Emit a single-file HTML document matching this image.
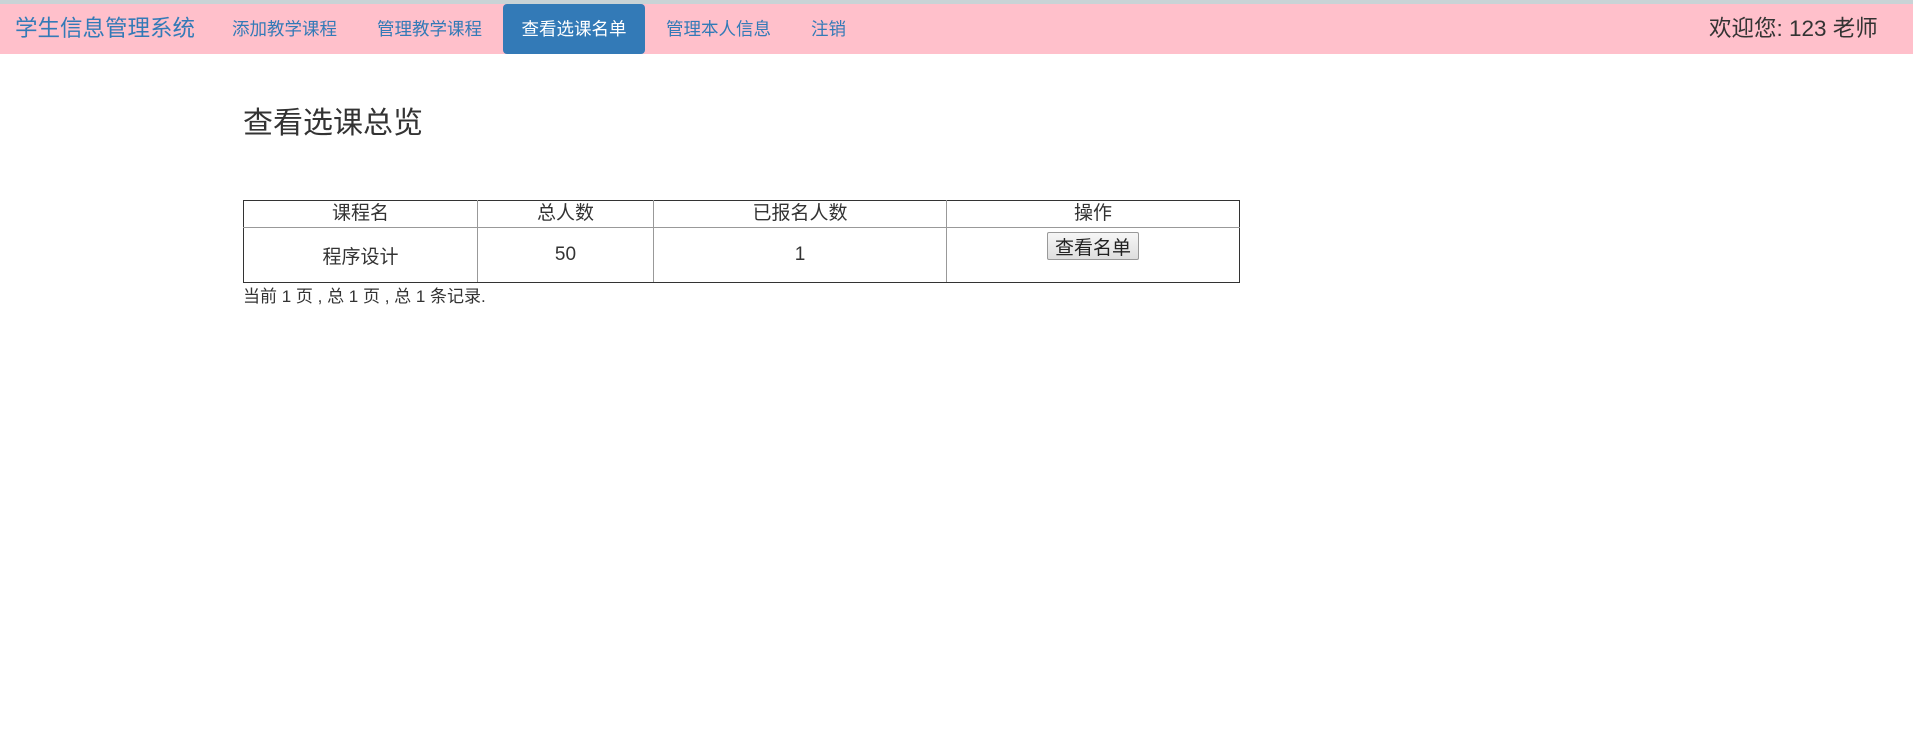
<!DOCTYPE html>
<html><head><meta charset="utf-8"><style>
*{margin:0;padding:0;box-sizing:border-box}
body{width:1913px;height:753px;background:#fff;font-family:"Liberation Sans","Noto Sans CJK SC",sans-serif;color:#333;position:relative;overflow:hidden}
.top{position:absolute;left:0;top:0;width:1913px;height:4px;background:#c9d3d6}
.nav{position:absolute;left:0;top:4px;width:1913px;height:50px;background:#ffc0cb}
.a{position:absolute;top:0;height:50px;line-height:50px;font-size:17.5px;color:#337ab7;white-space:nowrap}
.brand{font-size:22.5px;left:15px;color:#337ab7}
.act{background:#337ab7;color:#fff;border-radius:4px;left:503px;width:142px;text-align:center;height:50px;top:0}
.wel{position:absolute;left:1709px;top:4px;height:50px;line-height:50px;font-size:22.5px;color:#333;white-space:nowrap}
h1{position:absolute;left:243px;top:106px;font-size:30px;font-weight:normal;line-height:36px}
table{position:absolute;left:243px;top:200px;width:997px;border-collapse:collapse}
td{border:1px solid #999;text-align:center;font-size:19px}
tr.h td{height:27px;line-height:24px;font-size:19px;border-top:1px solid #333}
tr.r td{height:55px;border-bottom:1px solid #333}
td:first-child{border-left:1px solid #333}
td:last-child{border-right:1px solid #333}
td.op{vertical-align:top;padding-top:4px}
button{font-family:inherit;font-size:19px;padding:0 7px;height:28px;background:linear-gradient(#f6f6f6,#dedede);border:1px solid #999;border-radius:2px;color:#222}
.foot{position:absolute;left:243px;top:286px;font-size:17px;line-height:22px}
</style></head><body>
<div class="top"></div>
<div class="nav">
<div class="a brand">学生信息管理系统</div>
<div class="a" style="left:232px">添加教学课程</div>
<div class="a" style="left:377px">管理教学课程</div>
<div class="a act">查看选课名单</div>
<div class="a" style="left:666px">管理本人信息</div>
<div class="a" style="left:811px">注销</div>
</div>
<div class="wel">欢迎您: 123 老师</div>
<h1>查看选课总览</h1>
<table>
<tr class="h"><td style="width:234px">课程名</td><td style="width:176px">总人数</td><td style="width:293px">已报名人数</td><td>操作</td></tr>
<tr class="r"><td>程序设计</td><td>50</td><td>1</td><td class="op"><button>查看名单</button></td></tr>
</table>
<div class="foot">当前 1 页 , 总 1 页 , 总 1 条记录.</div>
</body></html>
